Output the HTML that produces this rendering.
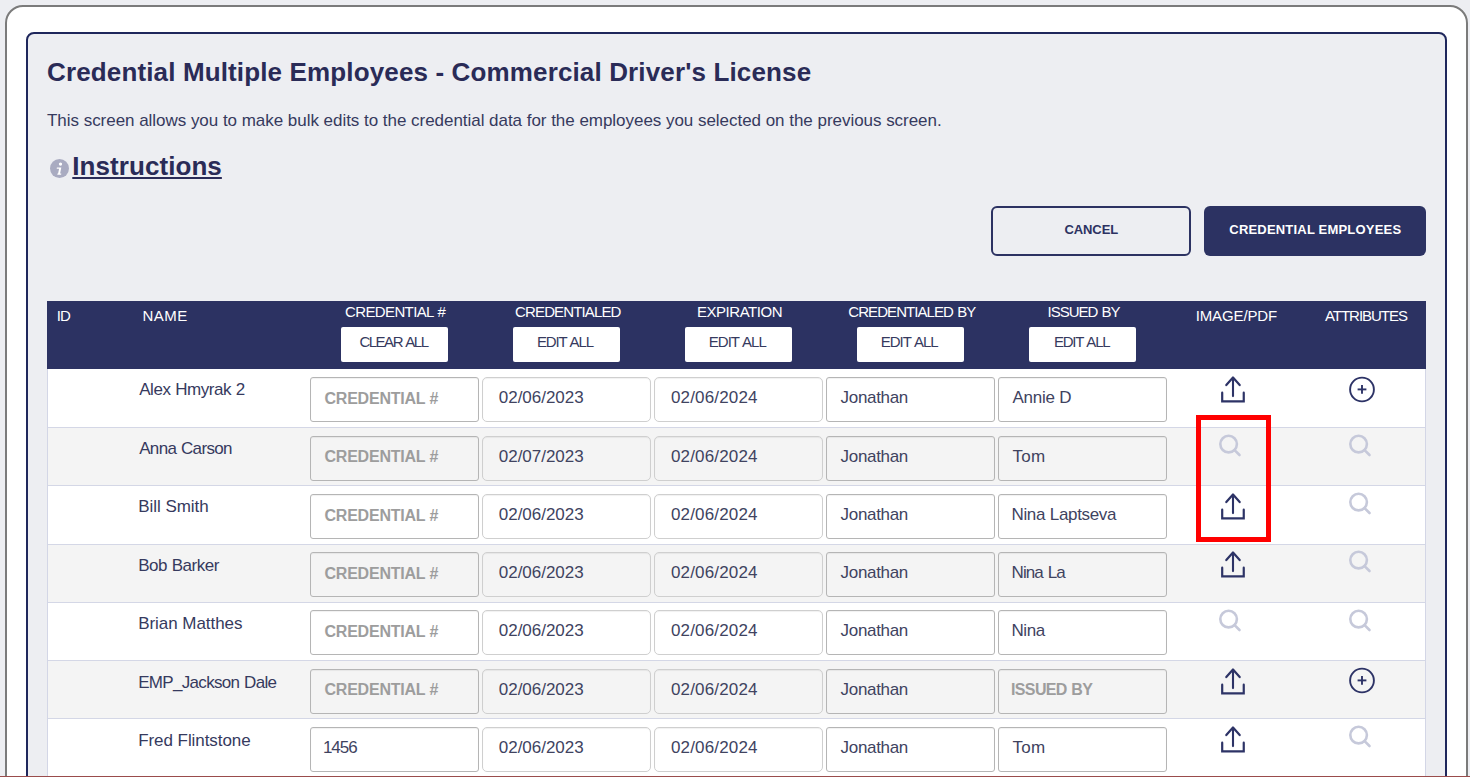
<!DOCTYPE html><html><head><meta charset="utf-8"><style>
*{box-sizing:border-box;margin:0;padding:0}
html,body{width:1470px;height:777px;overflow:hidden;background:#edeef2;font-family:"Liberation Sans",sans-serif;position:relative}
.a{position:absolute}
.t{position:absolute;white-space:nowrap;line-height:30px}
.outer{left:5px;top:5px;width:1463px;height:800px;border:2px solid #7b7b7b;border-radius:18px;background:#fff}
.inner{left:26px;top:32px;width:1421px;height:800px;border:2px solid #1f275c;border-radius:8px;background:#edeef2}
.info{left:50px;top:159px;width:19px;height:19px;border-radius:50%;background:#a9abc1}
.btn{top:206px;height:50px;border-radius:6px}
.cancel{left:991px;width:200px;border:2px solid #2c3262}
.cred{left:1204px;width:222px;background:#2c3262}
.table{left:47px;top:301px;width:1379px;height:480px;background:#fff;border-left:1px solid #d3d6e6;border-right:1px solid #d3d6e6}
.thead{left:47px;top:301px;width:1379px;height:68px;background:#2c3262}
.eb{top:327px;height:35px;background:#fff;border-radius:2px}
.row{left:48px;width:1377px;background:#f4f4f4}
.hl{left:48px;width:1377px;height:1px;background:#d4d7e6}
.inp{height:45px;width:169px;border:1px solid #b5b5b5;border-radius:3px;box-shadow:inset 0 1px 1px rgba(0,0,0,0.06)}
.inp.d{border:1px solid #cfcfcf;border-radius:5px}
.red{left:1196px;top:415px;width:75px;height:127px;border:5px solid #ff0000}
.bot{left:0;top:776px;width:1470px;height:1px;background:#9a4c4c}
</style></head><body>
<div class="a outer"></div>
<div class="a inner"></div>
<div class="a info"><svg width="19" height="19" viewBox="0 0 19 19"><circle cx="10.5" cy="5.1" r="1.65" fill="#fff"/><path d="M6.9 8.6 L11.3 8.6 L10.1 14.6 L11.3 14.6 L11.1 15.8 L7.3 15.8 L7.5 14.6 L8.1 14.6 L9.1 9.7 L6.7 9.7 Z" fill="#fff"/></svg></div>
<div class="a btn cancel"></div>
<div class="a btn cred"></div>
<div class="a table"></div>
<div class="a thead"></div>
<div class="a eb" style="left:341.0px;width:107px"></div>
<div class="a eb" style="left:513.0px;width:107px"></div>
<div class="a eb" style="left:685.0px;width:107px"></div>
<div class="a eb" style="left:857.0px;width:107px"></div>
<div class="a eb" style="left:1029.0px;width:107px"></div>
<div class="a hl" style="top:426.90px"></div>
<div class="a inp" style="left:310px;top:377px;background:#fff"></div>
<div class="a inp d" style="left:482px;top:377px;background:#fff"></div>
<div class="a inp d" style="left:654px;top:377px;background:#fff"></div>
<div class="a inp" style="left:826px;top:377px;background:#fff"></div>
<div class="a inp" style="left:998px;top:377px;background:#fff"></div>
<div class="a" style="left:1219px;top:374.00px;line-height:0"><svg width="28" height="31" viewBox="0 0 28 31"><g fill="none" stroke="#2d3366" stroke-width="2.1" stroke-linecap="round"><polyline points="3.2,18.7 3.2,27.4 24.75,27.4 24.75,18.7" stroke-linejoin="miter" stroke-width="2.2"/><line x1="14" y1="4" x2="14" y2="22.1"/><polyline points="7.3,11.1 14,3.5 20.7,11.1" stroke-linejoin="round" stroke-width="2.2"/></g></svg></div>
<div class="a" style="left:1349px;top:375.80px;line-height:0"><svg width="26" height="27" viewBox="0 0 26 27"><g fill="none" stroke="#2d3366"><circle cx="13" cy="13.5" r="11.9" stroke-width="1.9"/><line x1="8.6" y1="13.4" x2="17.4" y2="13.4" stroke-width="1.9"/><line x1="13" y1="9" x2="13" y2="17.8" stroke-width="1.9"/></g></svg></div>
<div class="a row" style="top:427.90px;height:57.30px"></div>
<div class="a hl" style="top:485.20px"></div>
<div class="a inp" style="left:310px;top:436px;background:#f4f4f4"></div>
<div class="a inp d" style="left:482px;top:436px;background:#f4f4f4"></div>
<div class="a inp d" style="left:654px;top:436px;background:#f4f4f4"></div>
<div class="a inp" style="left:826px;top:436px;background:#f4f4f4"></div>
<div class="a inp" style="left:998px;top:436px;background:#f4f4f4"></div>
<div class="a" style="left:1219px;top:433.70px;line-height:0"><svg width="24" height="24" viewBox="0 0 24 24"><g fill="none" stroke="#c6c9da" stroke-width="2.6"><circle cx="9.6" cy="10.1" r="8.3"/><line x1="15.6" y1="16.1" x2="20.5" y2="21" stroke-linecap="round"/></g></svg></div>
<div class="a" style="left:1349px;top:433.70px;line-height:0"><svg width="24" height="24" viewBox="0 0 24 24"><g fill="none" stroke="#c6c9da" stroke-width="2.6"><circle cx="9.6" cy="10.1" r="8.3"/><line x1="15.6" y1="16.1" x2="20.5" y2="21" stroke-linecap="round"/></g></svg></div>
<div class="a hl" style="top:543.50px"></div>
<div class="a inp" style="left:310px;top:494px;background:#fff"></div>
<div class="a inp d" style="left:482px;top:494px;background:#fff"></div>
<div class="a inp d" style="left:654px;top:494px;background:#fff"></div>
<div class="a inp" style="left:826px;top:494px;background:#fff"></div>
<div class="a inp" style="left:998px;top:494px;background:#fff"></div>
<div class="a" style="left:1219px;top:490.60px;line-height:0"><svg width="28" height="31" viewBox="0 0 28 31"><g fill="none" stroke="#2d3366" stroke-width="2.1" stroke-linecap="round"><polyline points="3.2,18.7 3.2,27.4 24.75,27.4 24.75,18.7" stroke-linejoin="miter" stroke-width="2.2"/><line x1="14" y1="4" x2="14" y2="22.1"/><polyline points="7.3,11.1 14,3.5 20.7,11.1" stroke-linejoin="round" stroke-width="2.2"/></g></svg></div>
<div class="a" style="left:1349px;top:492.00px;line-height:0"><svg width="24" height="24" viewBox="0 0 24 24"><g fill="none" stroke="#c6c9da" stroke-width="2.6"><circle cx="9.6" cy="10.1" r="8.3"/><line x1="15.6" y1="16.1" x2="20.5" y2="21" stroke-linecap="round"/></g></svg></div>
<div class="a row" style="top:544.50px;height:57.30px"></div>
<div class="a hl" style="top:601.80px"></div>
<div class="a inp" style="left:310px;top:552px;background:#f4f4f4"></div>
<div class="a inp d" style="left:482px;top:552px;background:#f4f4f4"></div>
<div class="a inp d" style="left:654px;top:552px;background:#f4f4f4"></div>
<div class="a inp" style="left:826px;top:552px;background:#f4f4f4"></div>
<div class="a inp" style="left:998px;top:552px;background:#f4f4f4"></div>
<div class="a" style="left:1219px;top:548.90px;line-height:0"><svg width="28" height="31" viewBox="0 0 28 31"><g fill="none" stroke="#2d3366" stroke-width="2.1" stroke-linecap="round"><polyline points="3.2,18.7 3.2,27.4 24.75,27.4 24.75,18.7" stroke-linejoin="miter" stroke-width="2.2"/><line x1="14" y1="4" x2="14" y2="22.1"/><polyline points="7.3,11.1 14,3.5 20.7,11.1" stroke-linejoin="round" stroke-width="2.2"/></g></svg></div>
<div class="a" style="left:1349px;top:550.30px;line-height:0"><svg width="24" height="24" viewBox="0 0 24 24"><g fill="none" stroke="#c6c9da" stroke-width="2.6"><circle cx="9.6" cy="10.1" r="8.3"/><line x1="15.6" y1="16.1" x2="20.5" y2="21" stroke-linecap="round"/></g></svg></div>
<div class="a hl" style="top:660.10px"></div>
<div class="a inp" style="left:310px;top:610px;background:#fff"></div>
<div class="a inp d" style="left:482px;top:610px;background:#fff"></div>
<div class="a inp d" style="left:654px;top:610px;background:#fff"></div>
<div class="a inp" style="left:826px;top:610px;background:#fff"></div>
<div class="a inp" style="left:998px;top:610px;background:#fff"></div>
<div class="a" style="left:1219px;top:608.60px;line-height:0"><svg width="24" height="24" viewBox="0 0 24 24"><g fill="none" stroke="#c6c9da" stroke-width="2.6"><circle cx="9.6" cy="10.1" r="8.3"/><line x1="15.6" y1="16.1" x2="20.5" y2="21" stroke-linecap="round"/></g></svg></div>
<div class="a" style="left:1349px;top:608.60px;line-height:0"><svg width="24" height="24" viewBox="0 0 24 24"><g fill="none" stroke="#c6c9da" stroke-width="2.6"><circle cx="9.6" cy="10.1" r="8.3"/><line x1="15.6" y1="16.1" x2="20.5" y2="21" stroke-linecap="round"/></g></svg></div>
<div class="a row" style="top:661.10px;height:57.30px"></div>
<div class="a hl" style="top:718.40px"></div>
<div class="a inp" style="left:310px;top:669px;background:#f4f4f4"></div>
<div class="a inp d" style="left:482px;top:669px;background:#f4f4f4"></div>
<div class="a inp d" style="left:654px;top:669px;background:#f4f4f4"></div>
<div class="a inp" style="left:826px;top:669px;background:#f4f4f4"></div>
<div class="a inp" style="left:998px;top:669px;background:#f4f4f4"></div>
<div class="a" style="left:1219px;top:665.50px;line-height:0"><svg width="28" height="31" viewBox="0 0 28 31"><g fill="none" stroke="#2d3366" stroke-width="2.1" stroke-linecap="round"><polyline points="3.2,18.7 3.2,27.4 24.75,27.4 24.75,18.7" stroke-linejoin="miter" stroke-width="2.2"/><line x1="14" y1="4" x2="14" y2="22.1"/><polyline points="7.3,11.1 14,3.5 20.7,11.1" stroke-linejoin="round" stroke-width="2.2"/></g></svg></div>
<div class="a" style="left:1349px;top:667.30px;line-height:0"><svg width="26" height="27" viewBox="0 0 26 27"><g fill="none" stroke="#2d3366"><circle cx="13" cy="13.5" r="11.9" stroke-width="1.9"/><line x1="8.6" y1="13.4" x2="17.4" y2="13.4" stroke-width="1.9"/><line x1="13" y1="9" x2="13" y2="17.8" stroke-width="1.9"/></g></svg></div>
<div class="a inp" style="left:310px;top:727px;background:#fff"></div>
<div class="a inp d" style="left:482px;top:727px;background:#fff"></div>
<div class="a inp d" style="left:654px;top:727px;background:#fff"></div>
<div class="a inp" style="left:826px;top:727px;background:#fff"></div>
<div class="a inp" style="left:998px;top:727px;background:#fff"></div>
<div class="a" style="left:1219px;top:723.80px;line-height:0"><svg width="28" height="31" viewBox="0 0 28 31"><g fill="none" stroke="#2d3366" stroke-width="2.1" stroke-linecap="round"><polyline points="3.2,18.7 3.2,27.4 24.75,27.4 24.75,18.7" stroke-linejoin="miter" stroke-width="2.2"/><line x1="14" y1="4" x2="14" y2="22.1"/><polyline points="7.3,11.1 14,3.5 20.7,11.1" stroke-linejoin="round" stroke-width="2.2"/></g></svg></div>
<div class="a" style="left:1349px;top:725.20px;line-height:0"><svg width="24" height="24" viewBox="0 0 24 24"><g fill="none" stroke="#c6c9da" stroke-width="2.6"><circle cx="9.6" cy="10.1" r="8.3"/><line x1="15.6" y1="16.1" x2="20.5" y2="21" stroke-linecap="round"/></g></svg></div>
<div class="t" style="left:47.00px;top:56.90px;font-size:26px;font-weight:700;color:#2a2b57;letter-spacing:0.138px;word-spacing:0.000px;">Credential Multiple Employees - Commercial Driver&#39;s License</div>
<div class="t" style="left:47.00px;top:106.00px;font-size:17px;font-weight:400;color:#363a5e;letter-spacing:-0.041px;word-spacing:0.041px;">This screen allows you to make bulk edits to the credential data for the employees you selected on the previous screen.</div>
<div class="t" style="left:72.30px;top:151.00px;font-size:26px;font-weight:700;color:#2a2b57;letter-spacing:0.064px;word-spacing:0.000px;text-decoration:underline;text-decoration-thickness:2px;text-underline-offset:2px;">Instructions</div>
<div class="t" style="left:1064.50px;top:214.90px;font-size:13px;font-weight:700;color:#2c3262;letter-spacing:-0.100px;word-spacing:0.000px;">CANCEL</div>
<div class="t" style="left:1229.30px;top:214.90px;font-size:13px;font-weight:700;color:#fff;letter-spacing:0.195px;word-spacing:0.000px;">CREDENTIAL EMPLOYEES</div>
<div class="t" style="left:56.70px;top:300.80px;font-size:15px;font-weight:400;color:#fff;letter-spacing:-0.800px;word-spacing:0.000px;">ID</div>
<div class="t" style="left:142.60px;top:300.90px;font-size:15px;font-weight:400;color:#fff;letter-spacing:0.400px;word-spacing:0.000px;">NAME</div>
<div class="t" style="left:345.00px;top:297.00px;font-size:15px;font-weight:400;color:#fff;letter-spacing:-0.620px;word-spacing:0.620px;">CREDENTIAL #</div>
<div class="t" style="left:515.10px;top:297.00px;font-size:15px;font-weight:400;color:#fff;letter-spacing:-0.873px;word-spacing:0.000px;">CREDENTIALED</div>
<div class="t" style="left:697.00px;top:297.00px;font-size:15px;font-weight:400;color:#fff;letter-spacing:-0.467px;word-spacing:0.000px;">EXPIRATION</div>
<div class="t" style="left:848.30px;top:297.00px;font-size:15px;font-weight:400;color:#fff;letter-spacing:-0.931px;word-spacing:0.931px;">CREDENTIALED BY</div>
<div class="t" style="left:1047.60px;top:297.00px;font-size:15px;font-weight:400;color:#fff;letter-spacing:-1.000px;word-spacing:1.000px;">ISSUED BY</div>
<div class="t" style="left:1195.70px;top:300.80px;font-size:15px;font-weight:400;color:#fff;letter-spacing:-0.125px;word-spacing:0.000px;">IMAGE/PDF</div>
<div class="t" style="left:1325.00px;top:300.80px;font-size:15px;font-weight:400;color:#fff;letter-spacing:-1.033px;word-spacing:0.000px;">ATTRIBUTES</div>
<div class="t" style="left:359.40px;top:326.80px;font-size:15px;font-weight:400;color:#363a5e;letter-spacing:-1.486px;word-spacing:1.486px;">CLEAR ALL</div>
<div class="t" style="left:536.90px;top:326.80px;font-size:15px;font-weight:400;color:#363a5e;letter-spacing:-1.133px;word-spacing:1.133px;">EDIT ALL</div>
<div class="t" style="left:708.80px;top:326.80px;font-size:15px;font-weight:400;color:#363a5e;letter-spacing:-1.000px;word-spacing:1.000px;">EDIT ALL</div>
<div class="t" style="left:880.70px;top:326.80px;font-size:15px;font-weight:400;color:#363a5e;letter-spacing:-1.000px;word-spacing:1.000px;">EDIT ALL</div>
<div class="t" style="left:1053.90px;top:326.80px;font-size:15px;font-weight:400;color:#363a5e;letter-spacing:-1.200px;word-spacing:1.200px;">EDIT ALL</div>
<div class="t" style="left:139.20px;top:375.30px;font-size:17px;font-weight:400;color:#363a5e;letter-spacing:-0.440px;word-spacing:0.440px;">Alex Hmyrak 2</div>
<div class="t" style="left:324.50px;top:383.90px;font-size:16px;font-weight:700;color:#9d9d9d;letter-spacing:-0.220px;word-spacing:0.220px;">CREDENTIAL #</div>
<div class="t" style="left:498.80px;top:383.20px;font-size:17px;font-weight:400;color:#40435f;letter-spacing:-0.022px;word-spacing:0.000px;">02/06/2023</div>
<div class="t" style="left:671.00px;top:383.20px;font-size:17px;font-weight:400;color:#40435f;letter-spacing:0.156px;word-spacing:0.000px;">02/06/2024</div>
<div class="t" style="left:840.60px;top:383.20px;font-size:17px;font-weight:400;color:#40435f;letter-spacing:-0.329px;word-spacing:0.000px;">Jonathan</div>
<div class="t" style="left:1012.50px;top:383.20px;font-size:17px;font-weight:400;color:#40435f;letter-spacing:-0.280px;word-spacing:0.280px;">Annie D</div>
<div class="t" style="left:139.20px;top:434.00px;font-size:17px;font-weight:400;color:#363a5e;letter-spacing:-0.656px;word-spacing:0.656px;">Anna Carson</div>
<div class="t" style="left:324.50px;top:442.20px;font-size:16px;font-weight:700;color:#9d9d9d;letter-spacing:-0.220px;word-spacing:0.220px;">CREDENTIAL #</div>
<div class="t" style="left:498.80px;top:441.50px;font-size:17px;font-weight:400;color:#40435f;letter-spacing:-0.022px;word-spacing:0.000px;">02/07/2023</div>
<div class="t" style="left:671.00px;top:441.50px;font-size:17px;font-weight:400;color:#40435f;letter-spacing:0.156px;word-spacing:0.000px;">02/06/2024</div>
<div class="t" style="left:840.60px;top:441.50px;font-size:17px;font-weight:400;color:#40435f;letter-spacing:-0.329px;word-spacing:0.000px;">Jonathan</div>
<div class="t" style="left:1012.50px;top:441.50px;font-size:17px;font-weight:400;color:#40435f;letter-spacing:0.250px;word-spacing:0.000px;">Tom</div>
<div class="t" style="left:138.20px;top:491.90px;font-size:17px;font-weight:400;color:#363a5e;letter-spacing:-0.037px;word-spacing:0.037px;">Bill Smith</div>
<div class="t" style="left:324.50px;top:500.50px;font-size:16px;font-weight:700;color:#9d9d9d;letter-spacing:-0.220px;word-spacing:0.220px;">CREDENTIAL #</div>
<div class="t" style="left:498.80px;top:499.80px;font-size:17px;font-weight:400;color:#40435f;letter-spacing:-0.022px;word-spacing:0.000px;">02/06/2023</div>
<div class="t" style="left:671.00px;top:499.80px;font-size:17px;font-weight:400;color:#40435f;letter-spacing:0.156px;word-spacing:0.000px;">02/06/2024</div>
<div class="t" style="left:840.60px;top:499.80px;font-size:17px;font-weight:400;color:#40435f;letter-spacing:-0.329px;word-spacing:0.000px;">Jonathan</div>
<div class="t" style="left:1011.50px;top:499.80px;font-size:17px;font-weight:400;color:#40435f;letter-spacing:-0.345px;word-spacing:0.345px;">Nina Laptseva</div>
<div class="t" style="left:138.20px;top:551.30px;font-size:17px;font-weight:400;color:#363a5e;letter-spacing:-0.475px;word-spacing:0.475px;">Bob Barker</div>
<div class="t" style="left:324.50px;top:558.80px;font-size:16px;font-weight:700;color:#9d9d9d;letter-spacing:-0.220px;word-spacing:0.220px;">CREDENTIAL #</div>
<div class="t" style="left:498.80px;top:558.10px;font-size:17px;font-weight:400;color:#40435f;letter-spacing:-0.022px;word-spacing:0.000px;">02/06/2023</div>
<div class="t" style="left:671.00px;top:558.10px;font-size:17px;font-weight:400;color:#40435f;letter-spacing:0.156px;word-spacing:0.000px;">02/06/2024</div>
<div class="t" style="left:840.60px;top:558.10px;font-size:17px;font-weight:400;color:#40435f;letter-spacing:-0.329px;word-spacing:0.000px;">Jonathan</div>
<div class="t" style="left:1011.50px;top:558.10px;font-size:17px;font-weight:400;color:#40435f;letter-spacing:-0.880px;word-spacing:0.880px;">Nina La</div>
<div class="t" style="left:138.20px;top:609.40px;font-size:17px;font-weight:400;color:#363a5e;letter-spacing:-0.055px;word-spacing:0.055px;">Brian Matthes</div>
<div class="t" style="left:324.50px;top:617.10px;font-size:16px;font-weight:700;color:#9d9d9d;letter-spacing:-0.220px;word-spacing:0.220px;">CREDENTIAL #</div>
<div class="t" style="left:498.80px;top:616.40px;font-size:17px;font-weight:400;color:#40435f;letter-spacing:-0.022px;word-spacing:0.000px;">02/06/2023</div>
<div class="t" style="left:671.00px;top:616.40px;font-size:17px;font-weight:400;color:#40435f;letter-spacing:0.156px;word-spacing:0.000px;">02/06/2024</div>
<div class="t" style="left:840.60px;top:616.40px;font-size:17px;font-weight:400;color:#40435f;letter-spacing:-0.329px;word-spacing:0.000px;">Jonathan</div>
<div class="t" style="left:1011.50px;top:616.40px;font-size:17px;font-weight:400;color:#40435f;letter-spacing:-0.433px;word-spacing:0.000px;">Nina</div>
<div class="t" style="left:138.20px;top:667.70px;font-size:17px;font-weight:400;color:#363a5e;letter-spacing:-0.679px;word-spacing:0.679px;">EMP_Jackson Dale</div>
<div class="t" style="left:324.50px;top:675.40px;font-size:16px;font-weight:700;color:#9d9d9d;letter-spacing:-0.220px;word-spacing:0.220px;">CREDENTIAL #</div>
<div class="t" style="left:498.80px;top:674.70px;font-size:17px;font-weight:400;color:#40435f;letter-spacing:-0.022px;word-spacing:0.000px;">02/06/2023</div>
<div class="t" style="left:671.00px;top:674.70px;font-size:17px;font-weight:400;color:#40435f;letter-spacing:0.156px;word-spacing:0.000px;">02/06/2024</div>
<div class="t" style="left:840.60px;top:674.70px;font-size:17px;font-weight:400;color:#40435f;letter-spacing:-0.329px;word-spacing:0.000px;">Jonathan</div>
<div class="t" style="left:1011.00px;top:675.40px;font-size:16px;font-weight:700;color:#9d9d9d;letter-spacing:-0.629px;word-spacing:0.629px;">ISSUED BY</div>
<div class="t" style="left:138.20px;top:726.20px;font-size:17px;font-weight:400;color:#363a5e;letter-spacing:-0.069px;word-spacing:0.069px;">Fred Flintstone</div>
<div class="t" style="left:322.90px;top:733.00px;font-size:17px;font-weight:400;color:#40435f;letter-spacing:-1.000px;word-spacing:0.000px;">1456</div>
<div class="t" style="left:498.80px;top:733.00px;font-size:17px;font-weight:400;color:#40435f;letter-spacing:-0.022px;word-spacing:0.000px;">02/06/2023</div>
<div class="t" style="left:671.00px;top:733.00px;font-size:17px;font-weight:400;color:#40435f;letter-spacing:0.156px;word-spacing:0.000px;">02/06/2024</div>
<div class="t" style="left:840.60px;top:733.00px;font-size:17px;font-weight:400;color:#40435f;letter-spacing:-0.329px;word-spacing:0.000px;">Jonathan</div>
<div class="t" style="left:1012.50px;top:733.00px;font-size:17px;font-weight:400;color:#40435f;letter-spacing:0.250px;word-spacing:0.000px;">Tom</div>
<div class="a red"></div>
<div class="a bot"></div>
</body></html>
